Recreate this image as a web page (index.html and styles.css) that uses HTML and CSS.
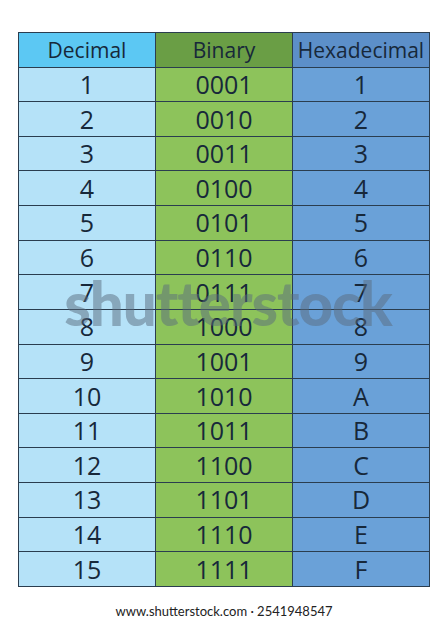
FILE: index.html
```html
<!DOCTYPE html>
<html>
<head>
<meta charset="utf-8">
<link rel="stylesheet" href="styles.css">
</head>
<body>
<div class="page">
  <div class="table-wrap">
    <table class="conv">
      <thead>
        <tr><th class="dec">Decimal</th><th class="bin">Binary</th><th class="hex">Hexadecimal</th></tr>
      </thead>
      <tbody>
        <tr><td class="dec">1</td><td class="bin">0001</td><td class="hex">1</td></tr>
        <tr><td class="dec">2</td><td class="bin">0010</td><td class="hex">2</td></tr>
        <tr><td class="dec">3</td><td class="bin">0011</td><td class="hex">3</td></tr>
        <tr><td class="dec">4</td><td class="bin">0100</td><td class="hex">4</td></tr>
        <tr><td class="dec">5</td><td class="bin">0101</td><td class="hex">5</td></tr>
        <tr><td class="dec">6</td><td class="bin">0110</td><td class="hex">6</td></tr>
        <tr><td class="dec">7</td><td class="bin">0111</td><td class="hex">7</td></tr>
        <tr><td class="dec">8</td><td class="bin">1000</td><td class="hex">8</td></tr>
        <tr><td class="dec">9</td><td class="bin">1001</td><td class="hex">9</td></tr>
        <tr><td class="dec">10</td><td class="bin">1010</td><td class="hex">A</td></tr>
        <tr><td class="dec">11</td><td class="bin">1011</td><td class="hex">B</td></tr>
        <tr><td class="dec">12</td><td class="bin">1100</td><td class="hex">C</td></tr>
        <tr><td class="dec">13</td><td class="bin">1101</td><td class="hex">D</td></tr>
        <tr><td class="dec">14</td><td class="bin">1110</td><td class="hex">E</td></tr>
        <tr><td class="dec">15</td><td class="bin">1111</td><td class="hex">F</td></tr>
      </tbody>
    </table>
    <div class="watermark">shutterstock</div>
  </div>
  <div class="footer">www.shutterstock.com · 2541948547</div>
</div>
</body>
</html>
```

FILE: styles.css
```css
html, body {
  margin: 0;
  padding: 0;
  background: #ffffff;
}
.page {
  width: 448px;
  height: 620px;
  padding-top: 32px;
  box-sizing: border-box;
  font-family: "Open Sans", "Noto Sans", sans-serif;
  color: #17283a;
}
.table-wrap {
  position: relative;
  margin-left: 18px;
  width: 412px;
}
.conv {
  border-collapse: collapse;
  width: 412px;
  height: 555px;
  table-layout: fixed;
}
.conv tr {
  height: 34.6px;
}
.conv th, .conv td {
  border: 1px solid #2a3d4f;
  text-align: center;
  padding: 0;
  line-height: 1;
}
.conv th {
  font-weight: 400;
  font-size: 21px;
  padding-top: 2px;
}
.conv td {
  font-size: 25px;
}
th.dec { background: #5cc8f3; }
th.bin { background: #6a9e45; }
th.hex { background: #5c8fc9; }
td.dec { background: #b5e2f8; }
td.bin { background: #8dc35b; }
td.hex { background: #6aa1d8; }
.watermark {
  position: absolute;
  left: 40px;
  top: 241px;
  width: 340px;
  text-align: center;
  font-family: "Lato", "Open Sans", sans-serif;
  font-weight: 900;
  font-size: 60px;
  letter-spacing: -1px;
  color: rgba(90, 108, 125, 0.5);
  line-height: 1;
  pointer-events: none;
}
.footer {
  margin-top: 16px;
  text-align: center;
  font-family: "Lato", "Open Sans", sans-serif;
  font-size: 13px;
  line-height: 16px;
  color: #222;
}
```
